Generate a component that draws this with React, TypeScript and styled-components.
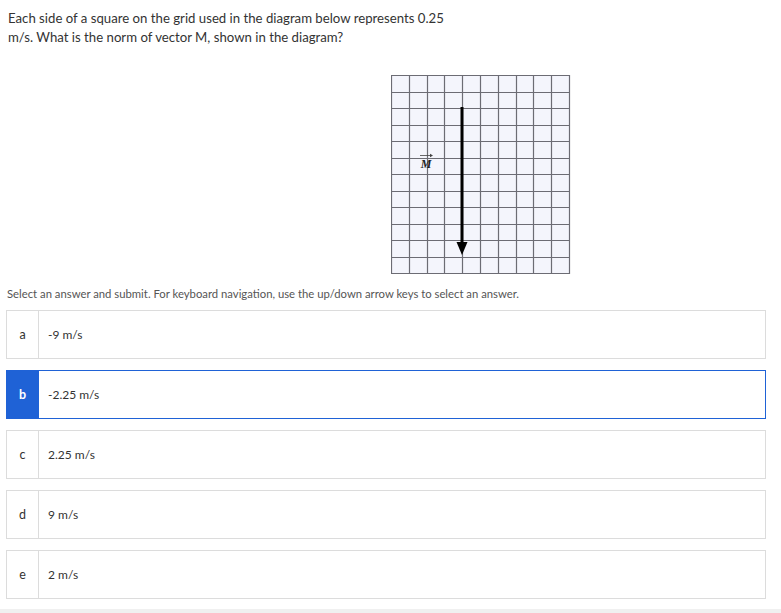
import React from "react";
import styled, { createGlobalStyle } from "styled-components";

const GlobalStyle = createGlobalStyle`
  html, body {
    margin: 0;
    padding: 0;
    background: #fff;
    font-family: "Lato", "Open Sans", sans-serif;
    color: #333;
  }
`;

const Page = styled.div`
  width: 781px;
  height: 613px;
  display: flex;
  flex-direction: column;
  overflow: hidden;
`;

const Question = styled.p`
  margin: 0;
  padding: 9px 8px 0 8px;
  width: 460px;
  font-size: 13.2px;
  line-height: 19px;
  color: #333;
`;

const DiagramRow = styled.div`
  display: flex;
  padding: 28px 0 0 391px;
  height: 199px;
`;

const Instruction = styled.p`
  margin: 0;
  padding: 13px 0 0 7px;
  font-size: 11.3px;
  line-height: 14px;
  color: #555;
`;

const Options = styled.div`
  display: flex;
  flex-direction: column;
  gap: 11px;
  padding: 9px 15px 0 6px;
`;

const Option = styled.div<{ $selected?: boolean }>`
  display: flex;
  height: 49px;
  box-sizing: border-box;
  border: 1px solid ${(p) => (p.$selected ? "#1f62d6" : "#dcdcdc")};
  background: #fff;
`;

const Letter = styled.div<{ $selected?: boolean }>`
  width: 31px;
  display: flex;
  align-items: center;
  justify-content: center;
  font-size: 12.5px;
  font-weight: ${(p) => (p.$selected ? 700 : 400)};
  color: ${(p) => (p.$selected ? "#fff" : "#333")};
  background: ${(p) => (p.$selected ? "#1f62d6" : "#fff")};
  border-right: 1px solid ${(p) => (p.$selected ? "#1f62d6" : "#dcdcdc")};
`;

const Answer = styled.div`
  display: flex;
  align-items: center;
  padding-left: 9px;
  font-size: 12px;
  color: #333;
`;

const Footer = styled.div`
  margin-top: 10px;
  flex: 1;
  background: #f0f0f0;
`;

function Diagram() {
  const cols = 10;
  const rows = 12;
  const w = 178;
  const h = 198;
  const cw = w / cols;
  const rh = h / rows;
  const lines: React.ReactNode[] = [];
  for (let i = 0; i <= cols; i++) {
    const x = Math.round(i * cw) + 0.5;
    lines.push(<line key={"v" + i} x1={x} y1={0} x2={x} y2={h + 1} />);
  }
  for (let j = 0; j <= rows; j++) {
    const y = Math.round(j * rh) + 0.5;
    lines.push(<line key={"h" + j} x1={0} y1={y} x2={w + 1} y2={y} />);
  }
  return (
    <svg width={w + 2} height={h + 2} viewBox={`0 0 ${w + 2} ${h + 2}`}>
      <rect x={0} y={0} width={w + 1} height={h + 1} fill="#f4f5fc" />
      <g stroke="#6c6c74" strokeWidth={1.2}>{lines}</g>
      <line x1={71} y1={32} x2={71} y2={170} stroke="#000" strokeWidth={3} />
      <polygon points="65.5,167 76.5,167 71,180" fill="#000" />
      <line x1={29} y1={80.5} x2={41} y2={80.5} stroke="#444" strokeWidth={0.8} />
      <polygon points="39,78.8 42,80.5 39,82.2" fill="#444" />
      <text
        x={35}
        y={93}
        textAnchor="middle"
        fontFamily="'Liberation Serif', serif"
        fontStyle="italic"
        fontWeight="bold"
        fontSize={12}
        fill="#222"
      >
        M
      </text>
    </svg>
  );
}

const answers = [
  { letter: "a", text: "-9 m/s" },
  { letter: "b", text: "-2.25 m/s", selected: true },
  { letter: "c", text: "2.25 m/s" },
  { letter: "d", text: "9 m/s" },
  { letter: "e", text: "2 m/s" },
];

export default function App() {
  return (
    <Page>
      <GlobalStyle />
      <Question>
        Each side of a square on the grid used in the diagram below represents 0.25
        m/s. What is the norm of vector M, shown in the diagram?
      </Question>
      <DiagramRow>
        <Diagram />
      </DiagramRow>
      <Instruction>
        Select an answer and submit. For keyboard navigation, use the up/down arrow keys to select an answer.
      </Instruction>
      <Options>
        {answers.map((a) => (
          <Option key={a.letter} $selected={a.selected}>
            <Letter $selected={a.selected}>{a.letter}</Letter>
            <Answer>{a.text}</Answer>
          </Option>
        ))}
      </Options>
      <Footer />
    </Page>
  );
}
